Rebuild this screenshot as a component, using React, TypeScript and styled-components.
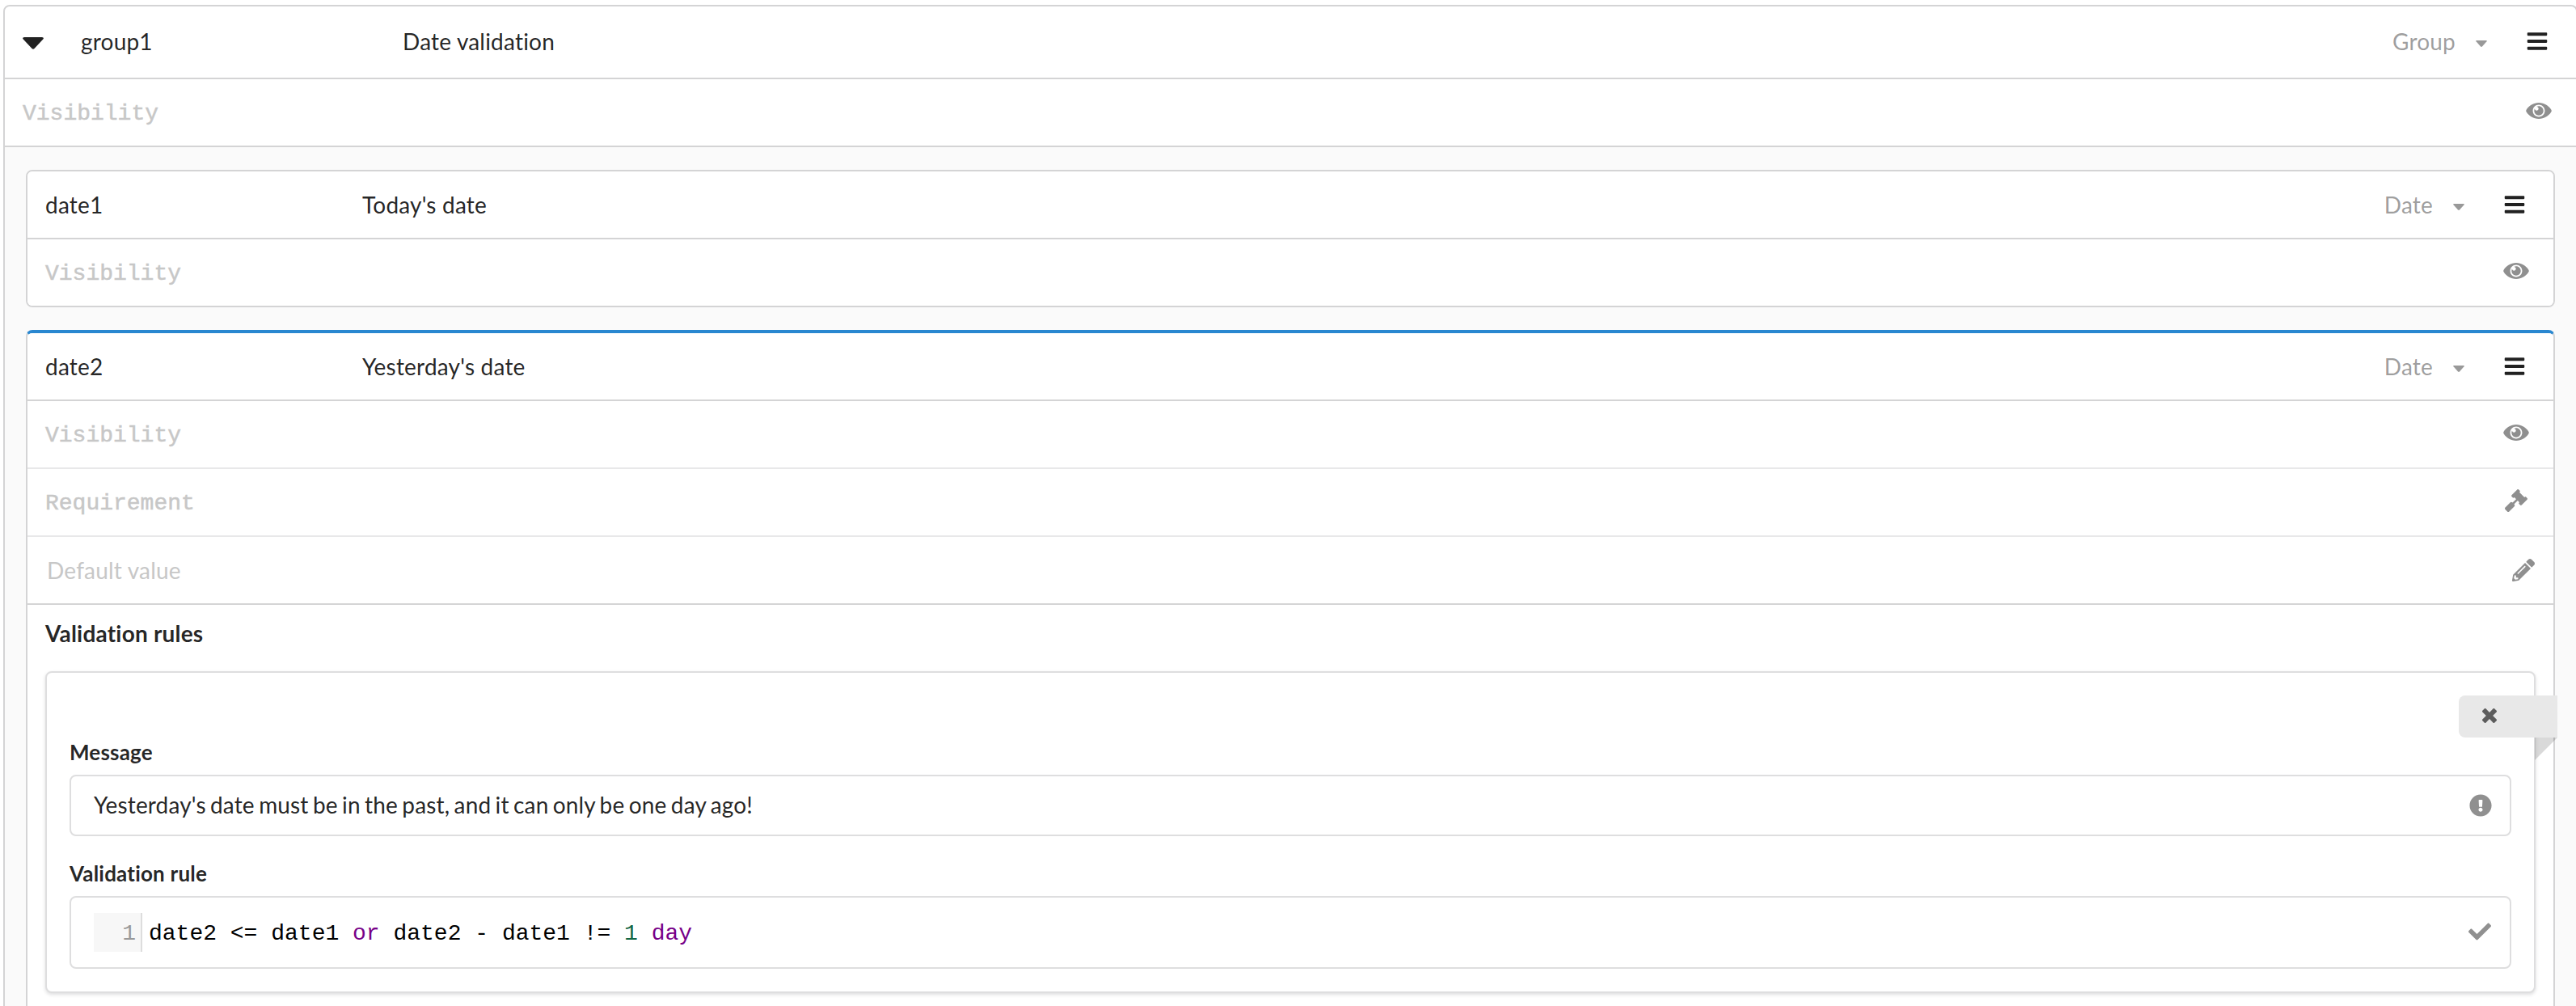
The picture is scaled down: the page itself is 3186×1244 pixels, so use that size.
import React from "react";
import styled, { createGlobalStyle } from "styled-components";
import { FaBars, FaCheck, FaExclamationCircle, FaGavel, FaPencilAlt } from "react-icons/fa";

const line = "#d4d4d5";
const ink = "rgba(0, 0, 0, 0.87)";

const GlobalStyle = createGlobalStyle`
  *, *::before, *::after { box-sizing: border-box; }
  body {
    margin: 0;
    overflow: hidden;
    background: #fff;
    color: ${ink};
    font-family: Lato, "Liberation Sans", sans-serif;
    font-size: 28px;
    font-variant-ligatures: none;
    letter-spacing: 0.2px;
    line-height: 34px;
  }
  svg { display: block; }
`;

const Page = styled.main`
  width: 3186px;
  height: 1244px;
  padding: 6px 0 0 4px;
  overflow: hidden;
`;

const GroupCard = styled.section`
  width: 3184px;
  height: 1400px;
  border: 2px solid ${line};
  border-radius: 8px;
  background: #fafafa;
  overflow: hidden;
`;

const GroupBody = styled.div`
  display: flex;
  flex-direction: column;
  gap: 28px;
  padding: 28px 26px;
`;

const QuestionCard = styled.section<{ $active?: boolean }>`
  width: 3128px;
  border: 2px solid ${line};
  border-top: ${(p) => (p.$active ? "4px solid #2987d0" : `2px solid ${line}`)};
  border-radius: 8px;
  background: #fff;
`;

const Header = styled.header<{ $group?: boolean }>`
  display: flex;
  align-items: center;
  height: ${(p) => (p.$group ? 90 : 84)}px;
  padding: 0 34px ${(p) => (p.$group ? 2 : 0)}px 22px;
  border-bottom: 2px solid ${line};
  border-radius: 6px 6px 0 0;
  background: #fff;
`;

const Toggle = styled.div`
  display: flex;
  width: 72px;
  padding-top: 5px;
`;

const QuestionId = styled.span<{ $group?: boolean }>`
  width: ${(p) => (p.$group ? 398 : 392)}px;
`;

const Label = styled.span`
  flex: 1;
`;

const TypePicker = styled.div`
  display: flex;
  align-items: center;
  color: rgba(0, 0, 0, 0.4);
`;

const Caret = styled.span`
  display: flex;
  margin: 6px 48px 0 25px;
`;

const Row = styled.div<{ $soft?: boolean; $last?: boolean; $inset?: number }>`
  display: flex;
  align-items: center;
  justify-content: space-between;
  height: ${(p) => (p.$last ? 82 : 84)}px;
  padding: 0 ${(p) => p.$inset ?? 30}px 0 22px;
  border-bottom: ${(p) => (p.$last ? "0" : `2px solid ${p.$soft ? "#e8e8e9" : line}`)};
  border-radius: ${(p) => (p.$last ? "0 0 6px 6px" : "0")};
  background: #fff;
  color: rgba(0, 0, 0, 0.44);
`;

const CodePlaceholder = styled.span`
  padding-top: 3px;
  color: #c7c7c7;
  font-family: "Liberation Mono", monospace;
  letter-spacing: 0;
  -webkit-text-stroke: 0.5px #c7c7c7;
`;

const Placeholder = styled.span`
  padding-left: 2px;
  color: #c7c7c7;
`;

const RowIcon = styled.span`
  display: flex;
  padding-bottom: 4px;
`;

const Rules = styled.div`
  padding: 18px 22px 60px;
`;

const Title = styled.h4`
  margin: 0 0 30px;
  font-size: 28px;
  line-height: 34px;
`;

const Segment = styled.div`
  position: relative;
  height: 398px;
  padding: 84px 28px 0;
  border: 2px solid #dededf;
  border-radius: 8px;
  background: #fff;
  box-shadow: 0 2px 4px rgba(34, 36, 38, 0.15);
`;

const Ribbon = styled.button`
  position: absolute;
  top: 28px;
  right: -29px;
  width: 122px;
  height: 52px;
  padding: 0 0 2px 29px;
  border: 0;
  border-radius: 8px 0 0 8px;
  background: #e8e8e8;
  color: rgba(0, 0, 0, 0.6);

  &::after {
    content: "";
    position: absolute;
    top: 100%;
    right: 0;
    width: 28px;
    height: 28px;
    background: rgba(0, 0, 0, 0.15);
    clip-path: polygon(0 0, 100% 0, 0 100%);
  }
`;

const FieldLabel = styled.label`
  display: block;
  height: 28px;
  margin-bottom: 14px;
  font-size: 26px;
  font-weight: 700;
  line-height: 28px;
`;

const Field = styled.div<{ $code?: boolean }>`
  display: flex;
  align-items: center;
  justify-content: space-between;
  height: ${(p) => (p.$code ? 90 : 76)}px;
  margin-bottom: 32px;
  padding: 0 ${(p) => (p.$code ? 23 : 22)}px 0 28px;
  border: 2px solid #dededf;
  border-radius: 8px;
`;

const Message = styled.span`
  padding-bottom: 2px;
  letter-spacing: 0.15px;
  word-spacing: -1.95px;
`;

const FieldIcon = styled.span<{ $lift?: number }>`
  display: flex;
  padding-bottom: ${(p) => p.$lift ?? 0}px;
  color: #909090;
`;

const Editor = styled.div`
  display: flex;
  align-items: center;
  height: 48px;
  color: #000;
  font-family: "Liberation Mono", monospace;
  letter-spacing: 0;
  white-space: pre;
`;

const Gutter = styled.span`
  width: 60px;
  height: 48px;
  margin-right: 8px;
  padding: 3px 6px 0 0;
  border-right: 2px solid #ddd;
  background: #f7f7f7;
  color: #999;
  line-height: 46px;
  text-align: right;
`;

const Code = styled.span`
  padding-top: 4px;
`;

const Keyword = styled.span`
  color: #770088;
`;

const Numeral = styled.span`
  color: #116644;
`;

const EyeIcon = () => (
  <svg width="32" height="28" viewBox="0 0 576 512" fill="currentColor">
    <path d="M569.354 231.631C512.969 135.949 407.81 72 288 72 168.14 72 63.004 135.994 6.646 231.631a47.999 47.999 0 0 0 0 48.739C63.031 376.051 168.19 440 288 440c119.86 0 224.996-63.994 281.354-159.631a47.997 47.997 0 0 0 0-48.738zM288 392c-75.162 0-136-60.827-136-136 0-75.162 60.826-136 136-136 75.162 0 136 60.826 136 136 0 75.162-60.826 136-136 136zm104-136c0 57.438-46.562 104-104 104s-104-46.562-104-104c0-17.708 4.431-34.379 12.236-48.973l-.001.032c0 23.651 19.173 42.823 42.824 42.823s42.824-19.173 42.824-42.823c0-23.651-19.173-42.824-42.824-42.824l-.032.001C253.621 156.431 270.292 152 288 152c57.438 0 104 46.562 104 104z" />
  </svg>
);

const CloseIcon = () => (
  <svg width="18" height="24" viewBox="0 0 384 512" fill="currentColor">
    <path d="M323.1 441l53.9-53.9c9.4-9.4 9.4-24.5 0-33.9L279.8 256l97.2-97.2c9.4-9.4 9.4-24.5 0-33.9L323.1 71c-9.4-9.4-24.5-9.4-33.9 0L192 168.2 94.8 71c-9.4-9.4-24.5-9.4-33.9 0L7 124.9c-9.4 9.4-9.4 24.5 0 33.9l97.2 97.2L7 353.2c-9.4 9.4-9.4 24.5 0 33.9L60.9 441c9.4 9.4 24.5 9.4 33.9 0l97.2-97.2 97.2 97.2c9.3 9.3 24.5 9.3 33.9 0z" />
  </svg>
);

const TypeSelect = ({ value }: { value: string }) => (
  <TypePicker>
    {value}
    <Caret>
      <svg width="14" height="8" viewBox="0 0 14 8" fill="currentColor">
        <path d="M1 0h12q1.4.2.5 1.3L8 7.5q-1 .9-2 0L.5 1.3Q-.4.2 1 0z" />
      </svg>
    </Caret>
  </TypePicker>
);

const QuestionHeader = ({ id, label }: { id: string; label: string }) => (
  <Header>
    <QuestionId>{id}</QuestionId>
    <Label>{label}</Label>
    <TypeSelect value="Date" />
    <FaBars size={28} />
  </Header>
);

const VisibilityRow = ({ soft, last }: { soft?: boolean; last?: boolean }) => (
  <Row $soft={soft} $last={last}>
    <CodePlaceholder>Visibility</CodePlaceholder>
    <RowIcon>
      <EyeIcon />
    </RowIcon>
  </Row>
);

export default function App() {
  return (
    <>
      <GlobalStyle />
      <Page>
        <GroupCard>
          <Header $group>
            <Toggle>
              <svg width="26" height="15" viewBox="0 0 26 15" fill="currentColor">
                <path d="M2 0h22q3 .4 1.3 2.6L14.5 14q-1.5 1.6-3 0L.7 2.6Q-1 .4 2 0z" />
              </svg>
            </Toggle>
            <QuestionId $group>group1</QuestionId>
            <Label>Date validation</Label>
            <TypeSelect value="Group" />
            <FaBars size={28} />
          </Header>
          <VisibilityRow />
          <GroupBody>
            <QuestionCard>
              <QuestionHeader id="date1" label="Today's date" />
              <VisibilityRow last />
            </QuestionCard>
            <QuestionCard $active>
              <QuestionHeader id="date2" label="Yesterday's date" />
              <VisibilityRow soft />
              <Row $soft $inset={32}>
                <CodePlaceholder>Requirement</CodePlaceholder>
                <RowIcon>
                  <FaGavel size={28} />
                </RowIcon>
              </Row>
              <Row $inset={23}>
                <Placeholder>Default value</Placeholder>
                <FaPencilAlt size={28} />
              </Row>
              <Rules>
                <Title>Validation rules</Title>
                <Segment>
                  <Ribbon aria-label="Remove rule">
                    <CloseIcon />
                  </Ribbon>
                  <FieldLabel>Message</FieldLabel>
                  <Field>
                    <Message>Yesterday's date must be in the past, and it can only be one day ago!</Message>
                    <FieldIcon $lift={1}>
                      <FaExclamationCircle size={28} />
                    </FieldIcon>
                  </Field>
                  <FieldLabel>Validation rule</FieldLabel>
                  <Field $code>
                    <Editor>
                      <Gutter>1</Gutter>
                      <Code>
                        date2 &lt;= date1 <Keyword>or</Keyword> date2 - date1 != <Numeral>1</Numeral>{" "}
                        <Keyword>day</Keyword>
                      </Code>
                    </Editor>
                    <FieldIcon $lift={3}>
                      <FaCheck size={28} />
                    </FieldIcon>
                  </Field>
                </Segment>
              </Rules>
            </QuestionCard>
          </GroupBody>
        </GroupCard>
      </Page>
    </>
  );
}
